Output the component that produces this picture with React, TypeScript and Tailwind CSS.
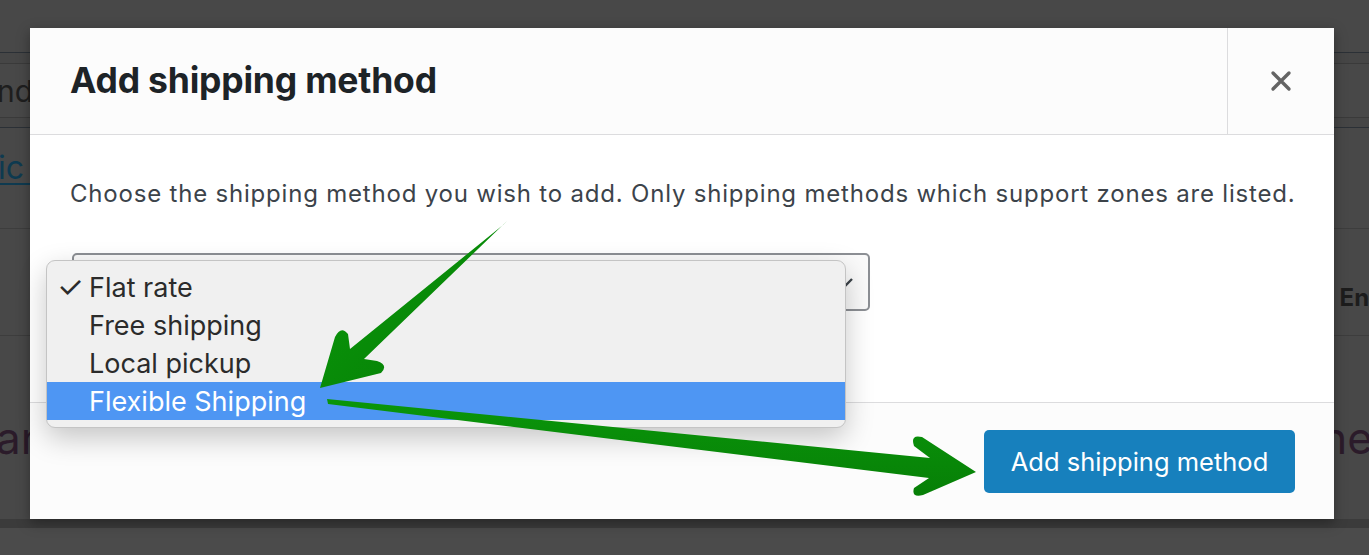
import React from "react";

const font = { fontFamily: "Inter, 'Noto Sans', 'Liberation Sans', sans-serif" };

function Arrows() {
  return (
    <svg
      className="pointer-events-none absolute left-0 top-0"
      width={1369}
      height={555}
      viewBox="0 0 1369 555"
    >
      <defs>
        <linearGradient id="g1" x1="0" y1="0" x2="1" y2="1">
          <stop offset="0" stopColor="#0a9a0a" />
          <stop offset="1" stopColor="#067c06" />
        </linearGradient>
        <linearGradient id="g2" x1="0" y1="0" x2="0" y2="1">
          <stop offset="0" stopColor="#0a960a" />
          <stop offset="1" stopColor="#077f07" />
        </linearGradient>
      </defs>
      <path
        d="M 507 221 L 364 359 L 377 361 Q 389 365 381 373 L 320 388 L 335 337 Q 341 325 348 334 L 350 349 L 503 225 Z"
        fill="url(#g1)"
      />
      <path
        d="M 327 399 L 930 458 L 914 446 Q 910 434 922 437 L 976 472 L 923 495 Q 911 498 914 488 L 929 478 L 328 404 Z"
        fill="url(#g2)"
      />
    </svg>
  );
}

function Page() {
  return (
    <div className="flex h-[555px] w-[1369px] flex-col bg-[#484848]" style={font}>
      <div className="h-[52px]" />
      <div className="h-px bg-[#2b3036]" />
      <div className="h-[10px] bg-[#464646]" />
      <div className="h-px bg-[#3a3a3a]" />
      <div className="flex h-[53px] items-center">
        <span className="-ml-[3px] text-[30px] leading-none text-[#1e1e1e]">nd</span>
      </div>
      <div className="h-px bg-[#3a3a3a]" />
      <div className="h-[9px] bg-[#464646]" />
      <div className="h-px bg-[#2b3036]" />
      <div className="flex h-[100px] items-start pt-[18px]">
        <span className="-ml-[2px] text-[32px] leading-[44px] text-[#0e3a50] underline decoration-[2px] underline-offset-[4px]">
          ic&nbsp;
        </span>
      </div>
      <div className="h-px bg-[#3d3d3d]" />
      <div className="flex h-[106px] items-center justify-end pt-[32px]">
        <span className="mr-[-14px] text-[24px] font-bold leading-none text-[#1c1c1c]">Ena</span>
      </div>
      <div className="h-px bg-[#3d3d3d]" />
      <div className="flex h-[183px] items-center justify-between pt-[20px]">
        <span className="-ml-[4px] text-[44px] leading-none text-[#2b1b2a]">an</span>
        <span className="mr-[-4px] text-[44px] leading-none text-[#2b1b2a]">he</span>
      </div>
      <div className="h-[9px] bg-[#3b3b3b]" />
      <div className="flex-1 bg-[#4b4b4b]" />
    </div>
  );
}

function Modal() {
  return (
    <div
      className="absolute left-[30px] top-[28px] flex h-[491px] w-[1304px] flex-col bg-white shadow-[0_4px_12px_rgba(0,0,0,0.35)]"
      style={font}
    >
      <div className="flex h-[107px] shrink-0 items-stretch border-b border-[#dcdcde] bg-[#fcfcfc]">
        <div className="flex flex-1 items-center pl-[40px]">
          <h1 className="text-[35.5px] font-bold leading-none tracking-[-0.2px] text-[#1d2327]">
            Add shipping method
          </h1>
        </div>
        <div className="flex w-[107px] items-center justify-center border-l border-[#dcdcde]">
          <svg width="22" height="22" viewBox="0 0 22 22">
            <path d="M3 3 L19 19 M19 3 L3 19" stroke="#646464" strokeWidth="3.4" strokeLinecap="round" />
          </svg>
        </div>
      </div>
      <div className="flex h-[267px] shrink-0 flex-col px-[40px] pt-[44px]">
        <p className="whitespace-nowrap text-[24px] leading-[30px] tracking-[0.8px] text-[#3c434a]">
          Choose the shipping method you wish to add. Only shipping methods which support zones are listed.
        </p>
        <div className="ml-[2px] mt-[44px] flex h-[58px] w-[798px] items-center justify-end rounded-[5px] border-2 border-[#8c8f94] bg-[#fafafa] pr-[14px]">
          <svg width="16" height="10" viewBox="0 0 16 10">
            <path d="M2 2 L8 8 L14 2" stroke="#3c434a" strokeWidth="2.4" fill="none" />
          </svg>
        </div>
      </div>
      <div className="flex flex-1 items-center justify-end border-t border-[#dcdcde] bg-[#fcfcfc] pr-[39px]">
        <button className="mt-[1px] flex h-[63px] w-[311px] items-center justify-center rounded-[5px] bg-[#1780bd] text-[25.5px] leading-none text-white">
          Add shipping method
        </button>
      </div>

      <div className="absolute left-[16px] top-[232px] flex w-[800px] flex-col rounded-[9px] border border-[#c4c4c4] bg-[#f0f0f0] py-[7px] shadow-[0_10px_28px_rgba(0,0,0,0.22)]">
        {[
          { label: "Flat rate", check: true, hi: false },
          { label: "Free shipping", check: false, hi: false },
          { label: "Local pickup", check: false, hi: false },
          { label: "Flexible Shipping", check: false, hi: true },
        ].map((it) => (
          <div
            key={it.label}
            className={
              it.hi
                ? "flex h-[38px] items-center bg-[#4e96f3] text-white"
                : "flex h-[38px] items-center text-[#2b2b2b]"
            }
          >
            <span className="w-[42px] pl-[10px] text-[30px] leading-none">{it.check ? "✓" : ""}</span>
            <span className="text-[27px] leading-none">{it.label}</span>
          </div>
        ))}
      </div>
    </div>
  );
}

export default function App() {
  return (
    <div className="relative h-[555px] w-[1369px] overflow-hidden">
      <Page />
      <Modal />
      <Arrows />
    </div>
  );
}
